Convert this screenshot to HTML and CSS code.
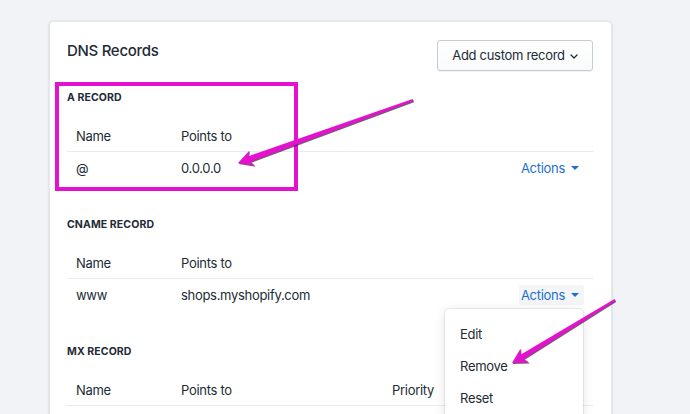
FILE: index.html
```html
<!DOCTYPE html>
<html>
<head>
<meta charset="utf-8">
<link rel="stylesheet" href="styles.css">
</head>
<body>
<div class="page">
  <div class="card">
    <div class="card-head">
      <h2 class="title">DNS Records</h2>
      <button class="btn">Add custom record <svg class="chev" width="8" height="5" viewBox="0 0 8 5"><path d="M1 1l3 3 3-3" fill="none" stroke="#212b36" stroke-width="1.3" stroke-linecap="round" stroke-linejoin="round"/></svg></button>
    </div>

    <section class="sec">
      <h3 class="sec-title">A RECORD</h3>
      <div class="tbl">
        <div class="row head"><span class="c1">Name</span><span class="c2">Points to</span><span class="c3"></span></div>
        <div class="row"><span class="c1">@</span><span class="c2">0.0.0.0</span><span class="c3"><span class="actions">Actions <i class="tri"></i></span></span></div>
      </div>
    </section>

    <section class="sec">
      <h3 class="sec-title">CNAME RECORD</h3>
      <div class="tbl">
        <div class="row head"><span class="c1">Name</span><span class="c2">Points to</span><span class="c3"></span></div>
        <div class="row"><span class="c1">www</span><span class="c2">shops.myshopify.com</span><span class="c3"><span class="actions hover">Actions <i class="tri"></i></span></span></div>
      </div>
    </section>

    <section class="sec">
      <h3 class="sec-title">MX RECORD</h3>
      <div class="tbl mx">
        <div class="row head"><span class="c1">Name</span><span class="c2">Points to</span><span class="c3">Priority</span></div>
      </div>
    </section>
  </div>

  <div class="menu">
    <div class="item">Edit</div>
    <div class="item">Remove</div>
    <div class="item">Reset</div>
  </div>

  <div class="mark"></div>

  <svg class="arrows" width="690" height="414" viewBox="0 0 690 414">
    <g transform="translate(0.6,1.1)" fill="#3b1638" opacity="0.7">
      <polygon points="412.6,98.9 248.3,156.3 249.5,150.6 238,163 255,165.7 250.6,161.8 413.4,101.1"/>
      <polygon points="614.5,299.0 520.9,354.5 520.6,348.4 512,363 529.2,362.4 523.8,359.0 615.5,301.0"/>
    </g>
    <g fill="#e411cf">
      <polygon points="412.6,98.9 248.3,156.3 249.5,150.6 238,163 255,165.7 250.6,161.8 413.4,101.1"/>
      <polygon points="614.5,299.0 520.9,354.5 520.6,348.4 512,363 529.2,362.4 523.8,359.0 615.5,301.0"/>
    </g>
  </svg>
</div>
</body>
</html>
```

FILE: styles.css
```css
* { box-sizing: border-box; }
html, body { margin: 0; padding: 0; }
body {
  background: #f1f3f6;
  font-family: Inter, "Liberation Sans", Arial, sans-serif;
  color: #212b36;
  width: 690px;
  height: 414px;
  overflow: hidden;
}
.page {
  position: relative;
  width: 690px;
  height: 414px;
  padding: 21px 0 0 49px;
}
.card {
  width: 563px;
  height: 420px;
  background: #fff;
  border: 1px solid #e3e6ea;
  border-radius: 4px;
  box-shadow: 0 0 0 1px rgba(63,63,68,0.03), 0 1px 3px rgba(63,63,68,0.10);
  padding: 18px 18px 0 17px;
}
.card-head {
  display: flex;
  justify-content: space-between;
  align-items: flex-start;
}
.title {
  margin: 1px 0 0;
  font-size: 15px;
  font-weight: 500;
  line-height: 20px;
  letter-spacing: -0.3px;
}
.btn {
  height: 31px;
  width: 156px;
  border: 1px solid #c4cdd5;
  border-radius: 3px;
  background: linear-gradient(#ffffff, #f9fafb);
  box-shadow: 0 1px 0 rgba(22,29,37,0.05);
  font-family: inherit;
  font-size: 13px;
  color: #212b36;
  letter-spacing: -0.3px;
  display: flex;
  align-items: center;
  justify-content: center;
  gap: 5px;
  padding: 0 0 1px;
}
.chev { display: block; margin-top: 2px; }
.sec { margin-top: 19px; }
.sec + .sec { margin-top: 33px; }
.sec-title {
  margin: 0;
  font-size: 10.5px;
  font-weight: 700;
  line-height: 16px;
  letter-spacing: 0.1px;
}
.tbl { margin-top: 14px; }
.row {
  display: grid;
  grid-template-columns: 105px 1fr auto;
  height: 32px;
  align-items: center;
  font-size: 13px;
  letter-spacing: -0.3px;
}
.row.head { border-bottom: 1px solid #e8ebee; }
.row > span { padding-left: 9px; }
.row:not(.head) { padding-bottom: 1px; }
.mx .row { grid-template-columns: 105px 211px 1fr; }
.c3 { padding-right: 14px; }
.mx .c3 { padding-right: 10px; }
.actions {
  color: #1b6fd0;
  display: inline-flex;
  align-items: center;
  gap: 6px;
  padding: 2px 5px 2px 2px;
  margin-right: -5px;
  border-radius: 3px;
}
.actions.hover { background: #f3f5f7; }
.tri {
  display: inline-block;
  width: 0; height: 0;
  border-left: 4.5px solid transparent;
  border-right: 4.5px solid transparent;
  border-top: 4.5px solid #1b6fd0;
  margin-top: 1px;
}
.menu {
  position: absolute;
  left: 445px;
  top: 309px;
  width: 138px;
  height: 120px;
  background: #fff;
  border-radius: 4px;
  box-shadow: 0 0 0 1px rgba(6,44,82,0.08), 0 2px 12px rgba(33,43,54,0.12);
  padding: 9px 0;
}
.item {
  height: 32px;
  line-height: 32px;
  padding-left: 15px;
  font-size: 13px;
  letter-spacing: -0.3px;
}
.mark {
  position: absolute;
  left: 55px;
  top: 82px;
  width: 243px;
  height: 109px;
  border: 4px solid #e411cf;
}
.arrows {
  position: absolute;
  left: 0;
  top: 0;
}
```
